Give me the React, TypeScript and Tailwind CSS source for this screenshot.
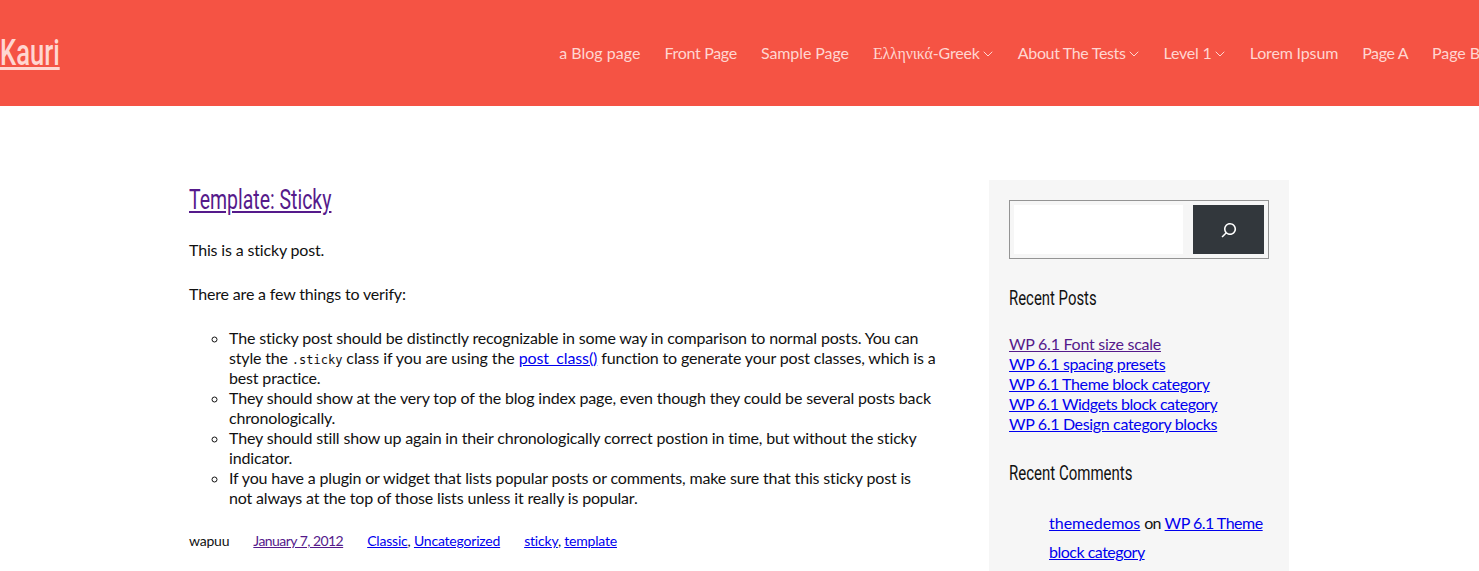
import { ChevronDown } from "lucide-react";
import type { ReactNode } from "react";

const sans = "font-['Lato','Noto_Sans',sans-serif]";
const head = "font-['Roboto',sans-serif]";

function NavItem({ children, menu, className = "" }: { children: ReactNode; menu?: boolean; className?: string }) {
  return (
    <a className={`flex items-center whitespace-nowrap ${className}`}>
      <span>{children}</span>
      {menu && <ChevronDown className="w-[16px] h-[16px] -mr-[2px] mt-[1px]" strokeWidth={1.5} />}
    </a>
  );
}

function Link({ children, visited, className = "" }: { children: ReactNode; visited?: boolean; className?: string }) {
  return <a className={`underline ${visited ? "text-[#551a8b]" : "text-[#0000ee]"} ${className}`}>{children}</a>;
}

export default function App() {
  return (
    <div className={`h-[571px] overflow-hidden bg-white text-[16px] leading-[20px] tracking-[-0.16px] text-[#111] ${sans}`}>
      <header className="h-[106px] bg-[#f55344] flex items-center justify-between overflow-hidden">
        <a className={`block origin-left scale-x-[0.71] text-[36px] leading-none tracking-normal font-medium text-[#ffd6d1] underline ${head}`}>Kauri</a>
        <nav className="flex gap-[24px] text-[#ffd6d1] shrink-0 -mr-[1px] tracking-[-0.08px]">
          <NavItem className="tracking-[0.02px]">a Blog page</NavItem>
          <NavItem className="tracking-[-0.3px]">Front Page</NavItem>
          <NavItem>Sample Page</NavItem>
          <NavItem menu className="tracking-[-0.15px]"><span className="font-['Liberation_Serif',serif] tracking-[-0.2px]">Ελληνικά</span>-Greek</NavItem>
          <NavItem menu><span className="tracking-[-0.35px]">About The Tests</span></NavItem>
          <NavItem menu className="tracking-[-0.2px]">Level 1</NavItem>
          <NavItem className="tracking-[-0.16px]">Lorem Ipsum</NavItem>
          <NavItem className="tracking-[-0.4px]">Page A</NavItem>
          <NavItem>Page B</NavItem>
        </nav>
      </header>
      <main className="flex pl-[189px] pt-[74px] gap-[48px]">
        <article className="w-[752px] shrink-0">
          <h2 className={`origin-left scale-x-[0.695] w-max text-[28px] leading-[39px] tracking-normal text-[#551a8b] underline ${head}`}>Template: Sticky</h2>
          <p className="mt-[21px]">This is a sticky post.</p>
          <p className="mt-[24px]">There are a few things to verify:</p>
          <ul className="mt-[24px] pl-[40px] list-[circle]">
            <li>
              The sticky post should be distinctly recognizable in some way in comparison to normal posts. You can style the{" "}
              <code className="font-['DejaVu_Sans_Mono',monospace] text-[12px] leading-none tracking-normal">.sticky</code>{" "}
              <span className="tracking-[-0.08px]">class if you are using the</span>{" "}
              <Link className="tracking-[-0.1px]">post_class()</Link> function to generate your post classes, which is a best practice.
            </li>
            <li>They should show at the very top of the blog index page, even though they could be several posts back chronologically.</li>
            <li>They should still show up again in their chronologically correct postion in time, but without the sticky indicator.</li>
            <li>If you have a plugin or widget that lists popular posts or comments, make sure that this sticky post is<br />not always at the top of those lists unless it really is popular.</li>
          </ul>
          <div className="mt-[23px] flex gap-[24px] text-[14px] leading-[20px] tracking-[-0.2px]">
            <span>wapuu</span>
            <Link visited className="tracking-[-0.55px]">January 7, 2012</Link>
            <span><Link>Classic</Link>, <Link>Uncategorized</Link></span>
            <span><Link>sticky</Link>, <Link>template</Link></span>
          </div>
        </article>
        <aside className="w-[300px] shrink-0 bg-[#f6f6f6] px-[20px] pt-[20px] h-[500px]">
          <div className="h-[59px] border border-[#949494] p-[4px] flex gap-[10px]">
            <div className="w-[169px] bg-white" />
            <button className="flex-1 bg-[#32373c] flex items-center justify-center">
              <svg width="24" height="24" viewBox="0 0 24 24" fill="#fff">
                <path d="M13 5c-3.3 0-6 2.7-6 6 0 1.4.5 2.7 1.3 3.7l-3.8 3.8 1.1 1.1 3.8-3.8c1 .8 2.3 1.3 3.7 1.3 3.3 0 6-2.7 6-6S16.3 5 13 5zm0 10.5c-2.5 0-4.5-2-4.5-4.5s2-4.5 4.5-4.5 4.5 2 4.5 4.5-2 4.5-4.5 4.5z" />
              </svg>
            </button>
          </div>
          <h2 className={`mt-[26px] origin-left scale-x-[0.745] w-max text-[20px] leading-[26px] tracking-normal text-[#111] ${head}`}>Recent Posts</h2>
          <ul className="mt-[23px] flex flex-col tracking-[-0.34px]">
            <li><Link visited className="tracking-[-0.25px]">WP 6.1 Font size scale</Link></li>
            <li><Link>WP 6.1 spacing presets</Link></li>
            <li><Link className="tracking-[-0.38px]">WP 6.1 Theme block category</Link></li>
            <li><Link className="tracking-[-0.45px]">WP 6.1 Widgets block category</Link></li>
            <li><Link>WP 6.1 Design category blocks</Link></li>
          </ul>
          <h2 className={`mt-[26px] origin-left scale-x-[0.75] w-max text-[20px] leading-[26px] tracking-normal text-[#111] ${head}`}>Recent Comments</h2>
          <ul className="mt-[22px] pl-[40px] leading-[29px]">
            <li><Link className="tracking-normal">themedemos</Link> <span className="tracking-[-0.8px]">on</span> <Link className="tracking-[-0.5px]">WP 6.1 Theme block category</Link></li>
          </ul>
        </aside>
      </main>
    </div>
  );
}
